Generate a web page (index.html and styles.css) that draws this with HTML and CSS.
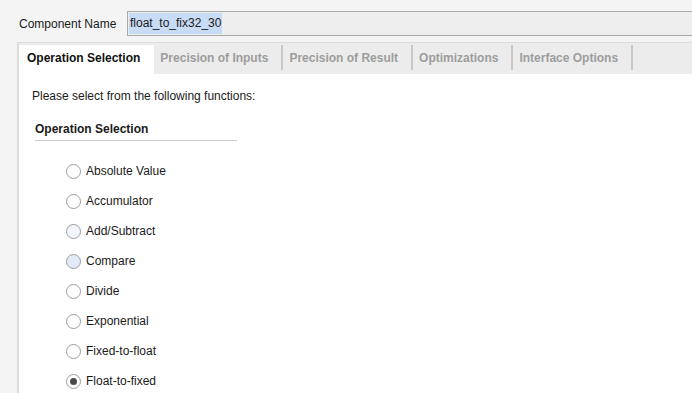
FILE: index.html
```html
<!DOCTYPE html>
<html lang="en">
<head>
  <meta charset="UTF-8">
  <title>Customize IP</title>
  <link rel="stylesheet" href="styles.css">
</head>
<body>
  <div class="name-row">
    <label class="name-label" for="compName">Component Name</label>
    <div class="name-field" id="compName"><span class="sel">float_to_fix32_30</span></div>
  </div>

  <div class="panel">
    <div class="tabs">
      <div class="tab active"><span>Operation Selection</span></div>
      <div class="tab"><span>Precision of Inputs</span></div>
      <div class="tab"><span>Precision of Result</span></div>
      <div class="tab"><span>Optimizations</span></div>
      <div class="tab"><span>Interface Options</span></div>
    </div>

    <div class="content">
      <p class="intro">Please select from the following functions:</p>
      <h3 class="group-title">Operation Selection</h3>

      <ul class="options">
        <li><span class="radio"></span>Absolute Value</li>
        <li><span class="radio"></span>Accumulator</li>
        <li><span class="radio hover-soft"></span>Add/Subtract</li>
        <li><span class="radio hover"></span>Compare</li>
        <li><span class="radio"></span>Divide</li>
        <li><span class="radio"></span>Exponential</li>
        <li><span class="radio"></span>Fixed-to-float</li>
        <li><span class="radio checked"></span>Float-to-fixed</li>
      </ul>
    </div>
  </div>
</body>
</html>
```

FILE: styles.css
```css
body {
  margin: 0;
  background-color: #f4f4f4;
  font-family: "Liberation Sans", Arial, sans-serif;
  font-size: 12px;
  color: #1a1a1a;
  overflow: hidden;
}

.name-row {
  display: flex;
  align-items: center;
  padding: 11px 0 0 19px;
}

.name-label {
  width: 108px;
}

.name-field {
  flex: 1;
  height: 23px;
  display: flex;
  align-items: center;
  padding-left: 1px;
  background-color: #eeeeee;
  border: 1px solid #a9a9a9;
  border-right: none;
}

.name-field .sel {
  background-color: #c9dcf5;
  padding: 3px 1px;
  line-height: 15px;
}

.panel {
  margin: 6px 0 0 17px;
  border-left: 2px solid #dddddd;
  border-top: 1px solid #dddddd;
  height: calc(100vh - 43px);
  overflow: hidden;
  background: #ffffff;
}

.tabs {
  display: flex;
  background-color: #ececec;
  padding-top: 2px;
}

.tab {
  height: 29px;
  font-weight: bold;
  color: #9d9d9d;
}

.tab span {
  display: block;
  height: 23px;
  padding: 2px 13px 0 6px;
  line-height: 23px;
  border-right: 2px solid #c8c8c8;
}

.tab.active {
  background: #ffffff;
  color: #111111;
}

.tab.active span {
  padding: 2px 14px 0 8px;
  border-right: none;
}

.content {
  padding: 15px 0 0 13px;
}

.intro {
  margin: 0;
  line-height: 15px;
}

.group-title {
  margin: 18px 0 0 3px;
  width: 202px;
  font-size: 12px;
  line-height: 15px;
  padding-bottom: 3px;
  border-bottom: 1px solid #cccccc;
}

.options {
  list-style: none;
  margin: 15px 0 0 0;
  padding: 0 0 0 34px;
}

.options li {
  display: flex;
  align-items: center;
  height: 30px;
}

.radio {
  width: 13px;
  height: 13px;
  border: 1px solid #9c9c9c;
  border-radius: 50%;
  background: #ffffff;
  margin-right: 5px;
  display: flex;
  align-items: center;
  justify-content: center;
}

.radio.hover-soft {
  background: #f2f6fc;
}

.radio.hover {
  background: #e2eaf7;
}

.radio.checked::after {
  content: "";
  width: 7px;
  height: 7px;
  border-radius: 50%;
  background: #4a4a4a;
}
```
